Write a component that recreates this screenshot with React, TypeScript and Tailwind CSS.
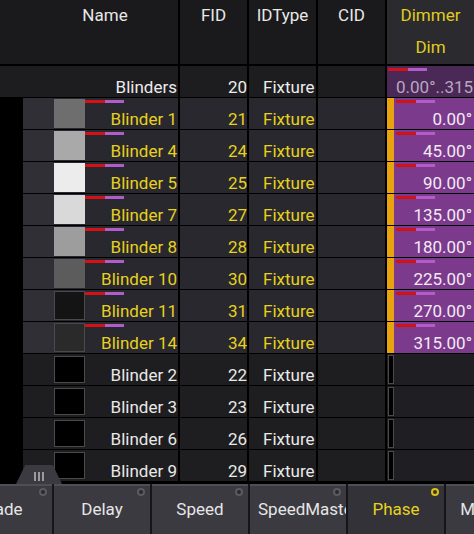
const cols = 'grid grid-cols-[23px_31px_31px_95px_69px_69px_69px_87px]';
const font = { fontFamily: 'Roboto, "Liberation Sans", sans-serif' };

type Fixture = { name: string; fid: number; swatch?: string; dim?: string };

const selected: Fixture[] = [
  { name: 'Blinder 1', fid: 21, swatch: 'bg-[#6e6e6e]', dim: '0.00°' },
  { name: 'Blinder 4', fid: 24, swatch: 'bg-[#a9a9a9]', dim: '45.00°' },
  { name: 'Blinder 5', fid: 25, swatch: 'bg-[#ececec]', dim: '90.00°' },
  { name: 'Blinder 7', fid: 27, swatch: 'bg-[#d9d9d9]', dim: '135.00°' },
  { name: 'Blinder 8', fid: 28, swatch: 'bg-[#9d9d9d]', dim: '180.00°' },
  { name: 'Blinder 10', fid: 30, swatch: 'bg-[#5c5c5c]', dim: '225.00°' },
  { name: 'Blinder 11', fid: 31, swatch: 'bg-[#141414] border border-[#4a4a4a]', dim: '270.00°' },
  { name: 'Blinder 14', fid: 34, swatch: 'bg-[#2a2a2a] border border-[#4a4a4a]', dim: '315.00°' },
];

const idle: Fixture[] = [
  { name: 'Blinder 2', fid: 22 },
  { name: 'Blinder 3', fid: 23 },
  { name: 'Blinder 6', fid: 26 },
  { name: 'Blinder 9', fid: 29 },
];

function Bars({ className }: { className: string }) {
  return (
    <div className={`absolute top-[2px] flex h-[3px] ${className}`}>
      <div className="w-[20px] bg-[#d0121b]" />
      <div className="w-[19px] bg-[#b15cc9]" />
    </div>
  );
}

function SelectedRow({ f }: { f: Fixture }) {
  return (
    <div className={`${cols} h-[32px] border-b border-black bg-[#28282e] text-[17px] leading-[20px] text-[#e7d11f]`}>
      <div className="bg-black" />
      <div className="bg-[#2f2f35]" />
      <div className={`my-[1px] ${f.swatch}`} />
      <div className="relative flex items-end justify-end border-r-2 border-black pr-[1px]">
        <Bars className="left-0" />
        {f.name}
      </div>
      <div className="flex items-end justify-end border-r-2 border-black">{f.fid}</div>
      <div className="flex items-end border-r-2 border-black pl-[14px]">Fixture</div>
      <div className="border-r-2 border-black" />
      <div className="flex">
        <div className="w-[7px] bg-[#e8a40f]" />
        <div className="relative flex flex-1 items-end justify-end bg-[#7b3a8b] pr-[2px] text-[#f2eaf4]">
          <Bars className="left-[2px]" />
          {f.dim}
        </div>
      </div>
    </div>
  );
}

function IdleRow({ f }: { f: Fixture }) {
  return (
    <div className={`${cols} h-[32px] border-b border-black bg-[#1e1e20] text-[17px] leading-[20px] text-[#e9e9e9]`}>
      <div className="bg-black" />
      <div className="bg-[#1e1e20]" />
      <div className="my-[2px] border border-[#4a4a4a] bg-black" />
      <div className="flex items-end justify-end border-r-2 border-black pr-[1px]">{f.name}</div>
      <div className="flex items-end justify-end border-r-2 border-black">{f.fid}</div>
      <div className="flex items-end border-r-2 border-black pl-[14px]">Fixture</div>
      <div className="border-r-2 border-black" />
      <div className="flex bg-[#1f1f23]">
        <div className="my-[1px] ml-[1px] w-[6px] border border-[#4a4a4a] bg-black" />
      </div>
    </div>
  );
}

function FooterButton({ label, active, left }: { label: string; active?: boolean; left?: boolean }) {
  return (
    <div
      className={`relative flex h-full w-[96px] shrink-0 items-center overflow-hidden whitespace-nowrap border-t-2 border-[#4e4e55] text-[17px] ${
        left ? 'justify-start pl-[8px]' : 'justify-center'
      } ${active ? 'bg-[#323238] text-[#e7d11f]' : 'bg-[#3a3a40] text-[#e6e6e6]'}`}
    >
      <div
        className={`absolute right-[5px] top-[2px] h-[8px] w-[8px] rounded-full border-2 ${
          active ? 'border-[#d8bf1c] bg-[#3a3420]' : 'border-[#5a5a60] bg-[#2a2a2e]'
        }`}
      />
      {label}
    </div>
  );
}

export default function App() {
  return (
    <div className="relative h-[534px] w-[474px] overflow-hidden bg-black" style={font}>
      {/* header */}
      <div className={`${cols} h-[66px] border-b-2 border-black bg-[#1a1a1c] text-[17px] text-[#e8e8e8]`}>
        <div className="col-span-4 flex justify-center border-r-2 border-black pl-[32px] pt-[3px]">Name</div>
        <div className="flex justify-center border-r-2 border-black pt-[3px]">FID</div>
        <div className="flex justify-center border-r-2 border-black pt-[3px]">IDType</div>
        <div className="flex justify-center border-r-2 border-black pt-[3px]">CID</div>
        <div className="flex flex-col items-center bg-[#2a2a2f] text-[#e0cd1d]">
          <div className="flex h-[32px] items-center">Dimmer</div>
          <div className="flex h-[32px] items-center">Dim</div>
        </div>
      </div>

      {/* group row */}
      <div className={`${cols} h-[32px] border-b border-black bg-[#1d1d1f] text-[17px] leading-[20px] text-[#ececec]`}>
        <div className="col-span-4 flex items-end justify-end border-r-2 border-black pr-[1px]">Blinders</div>
        <div className="flex items-end justify-end border-r-2 border-black">20</div>
        <div className="flex items-end border-r-2 border-black pl-[14px]">Fixture</div>
        <div className="border-r-2 border-black" />
        <div className="relative flex items-end overflow-hidden whitespace-nowrap bg-[#4b2957] pl-[9px] text-[#b8a6c1]">
          <Bars className="left-[1px]" />
          0.00°..315.00°
        </div>
      </div>

      {selected.map((f) => (
        <SelectedRow key={f.fid} f={f} />
      ))}
      {idle.map((f) => (
        <IdleRow key={f.fid} f={f} />
      ))}

      {/* sheet grip */}
      <div className="absolute left-[16px] top-[465px] flex h-[19px] w-[46px] items-center justify-center gap-[2px] bg-[#3a3a40] pt-[3px] [clip-path:polygon(20%_0,80%_0,100%_100%,0_100%)]">
        <div className="h-[9px] w-[2px] bg-[#9a9aa0]" />
        <div className="h-[9px] w-[2px] bg-[#9a9aa0]" />
        <div className="h-[9px] w-[2px] bg-[#9a9aa0]" />
      </div>

      {/* encoder bar */}
      <div className="ml-[-44px] mt-[2px] flex h-[50px] gap-[2px] bg-[#161618]">
        <FooterButton label="Fade" />
        <FooterButton label="Delay" />
        <FooterButton label="Speed" />
        <FooterButton label="SpeedMaster" left />
        <FooterButton label="Phase" active />
        <FooterButton label="MAtricks" />
      </div>
    </div>
  );
}
